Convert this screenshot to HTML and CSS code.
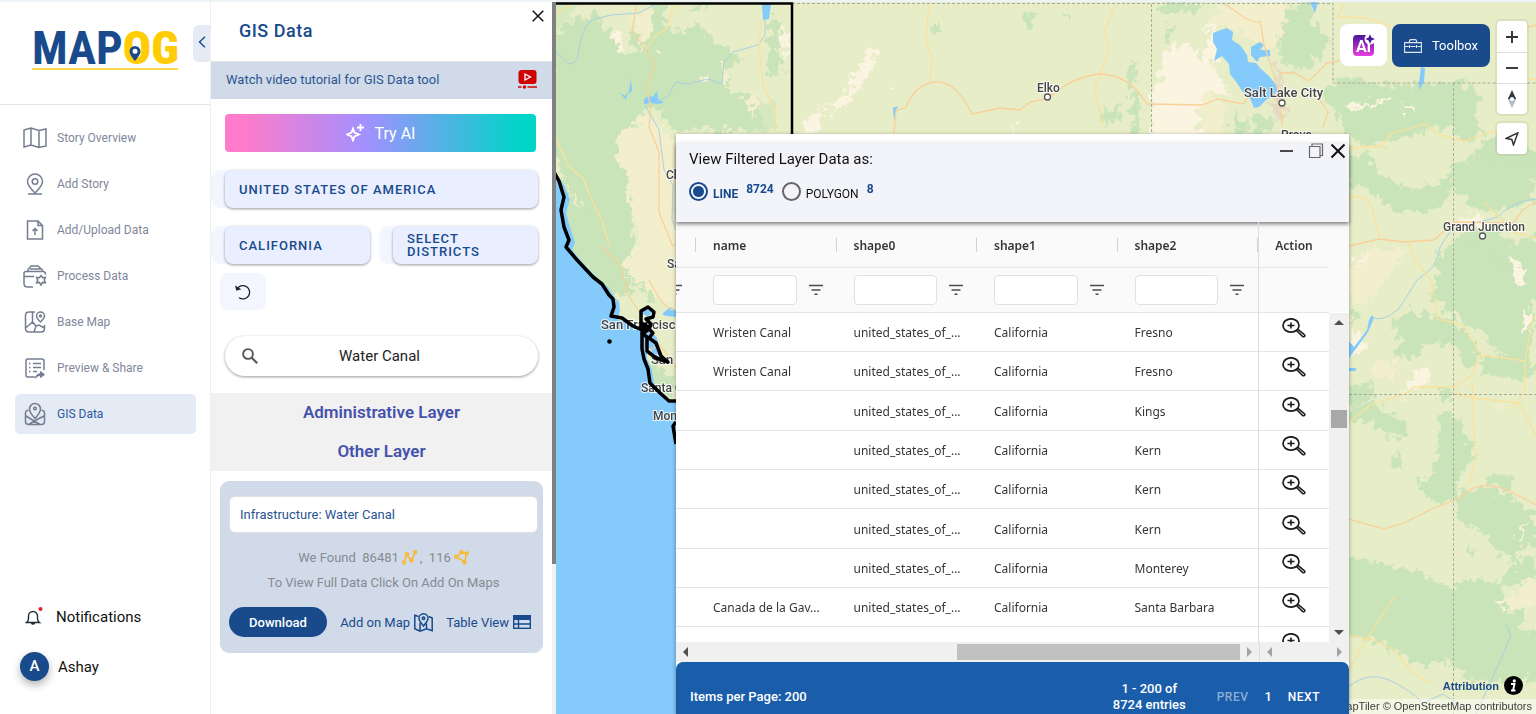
FILE: index.html
```html
<!DOCTYPE html>
<html lang="en">
<head>
  <meta charset="UTF-8" />
  <meta name="viewport" content="width=device-width, initial-scale=1.0"/>
  <title>MAPOG - GIS Data</title>
  <link rel="stylesheet" href="styles.css">
</head>
<body>

<!-- shared icons -->
<svg width="0" height="0" class="sprite" aria-hidden="true">
  <symbol id="filter" viewBox="0 0 14 12"><path d="M0 1.5h14M2.5 6h9M5.5 10.2h3" stroke="#4a4d50" stroke-width="1.6" fill="none"/></symbol>
  <symbol id="magnify" viewBox="0 0 24 20">
    <g fill="none" stroke="#1b1b1b">
      <ellipse cx="9" cy="7.5" rx="8" ry="6.7" stroke-width="1.7"/>
      <path d="M5.5 7.5h7M9 4.5v6" stroke-width="1.6"/>
      <path d="M14.2 12.2l6.3 6.2q1 .8 2 0 .9-1-.2-1.8l-6.6-5.4" stroke-width="1.5"/>
    </g>
  </symbol>
</svg>

<nav class="sidebar">
  <div class="brand">
    <div class="logo">
      <span class="logo-text">MAP<b>OG</b></span>
      <svg class="logo-pin" width="12" height="15" viewBox="0 0 12 15"><path fill="#184a8c" fill-rule="evenodd" d="M6 0a5.500 5.500 0 0 1 5.500 5.500C11.500 9 6 15 6 15S.5 9 .5 5.500A5.500 5.500 0 0 1 6 0zm0 2.800a2.500 2.500 0 1 0 0 5 2.500 2.500 0 0 0 0-5z"/></svg>
    </div>
    <button class="collapse" aria-label="Collapse menu">
      <svg width="8" height="12" viewBox="0 0 8 12"><path d="M7 .8 1.500 6 7 11.200" fill="none" stroke="#184a8c" stroke-width="1.400"/></svg>
    </button>
  </div>

  <ul class="menu">
    <li><a href="#">
      <svg viewBox="0 0 24 24"><path d="M1 4l7-2 8 2.500 7-1.500v17l-7 1.500L8 19l-7 2zM8 2v17M16 4.500v17"/></svg>
      Story Overview</a></li>
    <li><a href="#">
      <svg viewBox="0 0 24 24"><path d="M12 21C8 17 4.500 13.500 4.500 9.500a7.500 7.500 0 0 1 15 0C19.500 13.500 16 17 12 21zM5 22h14"/><circle cx="12" cy="9.500" r="2.800"/></svg>
      Add Story</a></li>
    <li><a href="#">
      <svg viewBox="0 0 24 24"><path d="M4.500 3h10.500l4.500 4.500V21h-15zM15 3v4.500h4.500M12 17v-6.500M9.500 13l2.500-2.500 2.500 2.500"/></svg>
      Add/Upload Data</a></li>
    <li><a href="#">
      <svg viewBox="0 0 24 24"><path d="M5 8V5.500L8 2h7l4.500 4V8M7 5h11M10 23H4.500Q1 23 1 19.500V9.500Q1 7.500 3 7.500h17q2.500 0 2.500 3M1 12.500h10"/><path d="M18 11.500l1.600 2.300 2.800-.3-1.200 2.600 1.200 2.600-2.800-.3L18 21l-1.600-2.600-2.800.3 1.200-2.600-1.200-2.600 2.800.3z"/></svg>
      Process Data</a></li>
    <li><a href="#">
      <svg viewBox="0 0 24 24"><path d="M12 2H6Q2.500 2 2.500 5.500v13Q2.500 22 6 22h12q3.500 0 3.500-3.500V15M9.500 2v10l-7 6M9.500 12l3.500 4-2 6M13 16l3-1 5.500 3"/><path d="M17.500 12C15 9.500 13.500 8 13.500 6a4 4 0 0 1 8 0c0 2-1.500 3.500-4 6z"/><circle cx="17.500" cy="6" r="1"/></svg>
      Base Map</a></li>
    <li><a href="#">
      <svg viewBox="0 0 24 24"><path d="M12 21H5q-2 0-2-2V5q0-2 2-2h14q2 0 2 2v9M10 7.500h8M10 11.500h8M10 15.500h4M6 7.500h1.500M6 11.500h1.500M6 15.500h1.500"/><path fill="#747d90" stroke-width="1" d="M12.500 22q.5-4 5-4.500V15.500l4 3-4 3v-2q-3-.3-5 2.500z"/></svg>
      Preview &amp; Share</a></li>
    <li><a href="#" class="active">
      <svg viewBox="0 0 24 24"><path d="M5.500 8.500L4 8.500Q2.500 9 2.500 11v8.500q0 3 3 3h13q3 0 3-3V11q0-2-1.500-2.500h-1.500M3 14l4 2.500 10 6M21 14l-6 3-9.500 5.500"/><path d="M12 16.500C9 13 6.500 10.500 6.500 7a5.500 5.500 0 0 1 11 0c0 3.500-2.500 6-5.500 9.500z"/><circle cx="12" cy="6.500" r="1.300"/></svg>
      GIS Data</a></li>
  </ul>

  <div class="user-menu">
    <a href="#" class="notifications">
      <svg width="18" height="20" viewBox="0 0 18 20"><path d="M1.500 15.500q2-1.500 2-4V9a4.500 4.500 0 0 1 9 0v2.500q0 2.500 2 4zM6.500 16a1.600 1.600 0 0 0 3 0" fill="none" stroke="#222c35" stroke-width="1.400"/><circle cx="15.500" cy="2" r="2" fill="#ec1c24"/></svg>
      Notifications
    </a>
    <a href="#" class="account"><span class="avatar">A</span>Ashay</a>
  </div>
</nav>

<section class="panel">
  <div class="panel-body">
    <header class="panel-header">
      <h1>GIS Data</h1>
      <button class="close" aria-label="Close panel">
        <svg width="12" height="12" viewBox="0 0 12 12"><path d="M.7.7l10.600 10.600M11.300.7L.7 11.300" stroke="#111" stroke-width="1.500"/></svg>
      </button>
    </header>
    <a href="#" class="tutorial">
      Watch video tutorial for GIS Data tool
      <svg width="19" height="19" viewBox="0 0 19 19"><rect x=".5" width="18" height="14" rx="3" fill="#cf0000"/><path d="M7 4l5.500 3L7 10z" fill="none" stroke="#fff" stroke-width="1.300"/><path d="M0 17h3.500M9.500 17H19" stroke="#cf0000" stroke-width="1.500"/><circle cx="6.500" cy="17" r="1.700" fill="#cf0000"/></svg>
    </a>

    <div class="picker">
      <button class="try-ai">
        <svg width="18" height="18" viewBox="0 0 18 18"><path d="M7 4.500l1.500 4 4.500 2-4.500 2L7 16.500l-1.500-4-4.500-2 4.500-2z" fill="none" stroke="#fff" stroke-width="1.800"/><path d="M14.500 0v7M11 3.500h7" stroke="#fff" stroke-width="1.800"/></svg>
        Try AI
      </button>
      <div class="region"><button>United States of America</button></div>
      <div class="region-row">
        <div class="region"><button>California</button></div>
        <div class="region"><button>Select Districts</button></div>
      </div>
      <button class="reset" aria-label="Reset">
        <svg width="16" height="16" viewBox="0 0 16 16"><path d="M1.800 5.500A6.700 6.700 0 1 1 4 13.700" fill="none" stroke="#222" stroke-width="1.300"/><path d="M0 1.500l1.300 5.200 5-1.400z" fill="#222"/></svg>
      </button>
      <label class="search">
        <svg width="16" height="16" viewBox="0 0 16 16"><circle cx="6" cy="6" r="4.900" fill="none" stroke="#555" stroke-width="1.900"/><path d="M9.500 9.500l5.700 5.700" stroke="#555" stroke-width="2.200"/></svg>
        <input type="text" value="Water Canal" aria-label="Search data">
      </label>
    </div>

    <div class="layer-groups">
      <h2>Administrative Layer</h2>
      <h2>Other Layer</h2>
    </div>

    <article class="result">
      <h3>Infrastructure: Water Canal</h3>
      <p>We Found&nbsp; 86481
        <svg width="15" height="15" viewBox="0 0 15 15"><g fill="none" stroke="#fbb829" stroke-width="1.500"><path d="M2.500 11.500l2-7 5 6 3.500-8"/><circle cx="2" cy="12.500" r="1.400"/><circle cx="5" cy="4" r="1.400"/><circle cx="9.500" cy="10.500" r="1.400"/><circle cx="13" cy="2" r="1.400"/></g></svg>,&nbsp; 116
        <svg width="15" height="15" viewBox="0 0 15 15"><g fill="none" stroke="#fbb829" stroke-width="1.500"><path d="M3 6.500l4-3.500 5 .500-1 8.500-7-4z"/><circle cx="2" cy="7" r="1.400"/><circle cx="7.500" cy="2" r="1.400"/><circle cx="12.800" cy="3.500" r="1.400"/><circle cx="10.500" cy="12.500" r="1.400"/></g></svg>
      </p>
      <p>To View Full Data Click On Add On Maps</p>
      <div class="actions">
        <button class="download">Download</button>
        <a href="#">Add on Map
          <svg width="19" height="19" viewBox="0 0 19 19"><g fill="none" stroke="#184a8c" stroke-width="1.500"><path d="M4.500 3.500L.8 2.300v13.500l5.200 2.400 6.500-2.400 5.700 2V5l-3.400-1.500M6 10v8M12.500 10.500v5"/><path d="M9.500 13C6.500 9.500 5 7.500 5 5.300a4.500 4.500 0 0 1 9 0c0 2.200-1.500 4.200-4.500 7.700z"/><circle cx="9.500" cy="5.300" r="1.200"/></g></svg>
        </a>
        <a href="#">Table View
          <svg width="18" height="14" viewBox="0 0 18 14"><rect x=".7" y=".7" width="16.600" height="12.600" fill="none" stroke="#184a8c" stroke-width="1.400"/><path fill="#184a8c" d="M0 0h18v5H0z"/><path d="M0 9h18M5.500 5v9" stroke="#184a8c" stroke-width="1.400"/></svg>
        </a>
      </div>
    </article>
  </div>
  <div class="panel-scroll"><div class="panel-thumb"></div></div>
</section>

<main class="map">
  <svg class="map-canvas" viewBox="556 2 980 712" preserveAspectRatio="xMinYMin slice">
    <defs>
      <filter id="rough" x="-5%" y="-5%" width="110%" height="110%">
        <feTurbulence type="fractalNoise" baseFrequency="0.13" numOctaves="4" seed="4"/>
        <feDisplacementMap in="SourceGraphic" scale="20" xChannelSelector="R" yChannelSelector="G"/>
      </filter>
    </defs>
    <rect x="540" width="1020" height="730" fill="#e7edc7"/>

    <!-- forests and dry land -->
    <g filter="url(#rough)">
      <g transform="translate(550) scale(.3333)">
        <path fill="#d6e8bd" d="M0 0h90l-40 60L0 110zM380 430l-20 60 20 60zM600 330l70-30 10 90-80 10z"/>
        <g fill="#c8e4b8">
          <path d="M0 120L60 60l70-20 50 60 30 60 40 0-10-60 20-30 40 20 50-15 40 20 60-20 50 60 40 15 40 35-30 15-20 70 90 30 30 90H370l-60-75-40 30-40 40-15 60 40 90 15 90-30 60 20 90 30 50 70 30-50 50-60-60-50-40-40-90-60-90-50-70-50-110z"/>
          <path d="M0 510l40 30 30 70 60 30 50 110 40 70 30 60-60 20-120-130-30-70z"/>
          <path d="M300 0h50l-10 90-35-10zM655 80l30-30 10 170-40 10zM1140 90l35-30-5 40zM1425 40h25v45h-25zM450 0l30 20-70 20zM270 1075l50 15 50 50 5 55-80-40zM340 800l-20 80 40 30z"/>
        </g>
        <path fill="#f3efcd" d="M215 390l85-45 45 55 35 30v500l-40-20-80-70-40-60 60-50-30-80-20-130-30-40zM250 60l50-40 10 80-30 45zM510 180l40 30-30 40zM590 300l30-20-10 70z"/>
        <path fill="#fbf4e0" d="M945 150l42 10-40 80-30 50-80 60 20-50 30-20 40-80 25-20zM825 320l-30 80h-35l10-50zM190 100l20-5 5 60-15-10zM320 145l15 5-8 12zM1020 260l14 4-8 18zM450 230l35-5-20 20zM1380 370l25-5-20 30zM690 70l15 10 15 100-20-20z"/>
      </g>
      <g transform="translate(1040) scale(.3333)">
        <g fill="#c8e4b8">
          <path d="M70 35l25 5-10 35zM370 75l30 5-15 55zM350 10h150l-30 30-110-5zM260 190l25-10 5 70-30 20zM275 270l25 10v120h-25zM180 340l60-30v50l-50 15zM575 340l50 20-10 45h-30zM640 340l60 10-10 45h-50zM750 20l60-10 10 60 50 60-70 80-70-20-20-60zM480 290l40 20-30 80z"/>
          <path d="M850 270l70-40 120 25 110-5 110-10 60 50-20 60 40 50-70 30-40-50-80 10-110 40-70 10-60-50z"/>
          <path d="M910 480l70-20 60 80 70 30 80-10 70-60 40-50 80-50 120 60v70l-60 20-70-10-60 60-70-30-60 70-120-10-60-50-80-30z"/>
          <path d="M1230 500l80-30 170 20v110l-110 40-80-20zM1250 700l110-30 60 60 80-30v200h-220z"/>
        </g>
        <path fill="#f3efcd" d="M540 10h200l-20 110-40 30-90-60-80-20zM480 260l80 60-10 90h-60z"/>
        <path fill="#fbf4e0" d="M500 70l60 30-40 100 60 100-80-30-30 90 20 50H335v-130l30-60 10-60 60-40 50 60 20-50zM910 310l60 5 70-25 10 10-60 20-60 15zM1080 310l50 15-25 10zM980 740l100 20-60 30zM1250 660l70-20 20 40-70 10z"/>
        <path fill="#e4d9c4" d="M695 180l15-5 15 80 15 70-25 45-20-60 15-60z"/>
      </g>
      <g transform="translate(1330 160) scale(.3333)">
        <g fill="#c8e4b8">
          <path d="M310 290l60-40 90 10 60 60 60 60 40 100-30 120-90-20-40-60-90-50-70-60 20-60zM180 490l60-40 120 30 60 40 30 60-30 50-50-70-80-20-40 60-50-10 10-60zM450 600l120-20 60 50-50 30-120-20zM60 680l60-10 10 50-70 20zM60 740l80-10 90 60-10 50-60-20-50-40-60 10zM330 690h40v30h-40zM330 760l60 10 45 120-50 60-20 80-60-10-50-60 50-10 20-80zM180 900l30-30 20 50-40 5zM470 940l80 10-10 40-60-20zM380 1000l90-20 90 40 60 60v70l-70 20 40 60-90-60-40-50-80-50zM410 1150l30 20-20 15zM520 1240l100-60v80l-100 20z"/>
          <path d="M0 1180l100 20 100 20 80 20 70 40 60-20 120 10-20 60 80 20-20 60 70 0v150H420l-70-60-80 20-70-40-60-40-80-10-60-50zM60 440l25 20-25 40z"/>
        </g>
        <path fill="#f3efcd" d="M60 310l60-50 100 10-30 60-60 80-70 20zM130 600l80 10-10 50-80-10zM530 1320l90-70v80l-80 30zM500 740l30 5-10 20z"/>
        <path fill="#fbf4e0" d="M60 510l20 10 40 30-60 50zM240 660l30-45 30 20-10 40-50 10-30 30zM60 310l70-40-40 45zM540 280l40 50 10 60-40-30zM590 450l20 20-10 50-30-5zM555 1140l40-55-15 50zM500 1330l30-10-10 25z"/>
      </g>
    </g>

    <!-- water -->
    <g fill="#84cafb">
      <path d="M540 170l16 4 8 11 6 14-4 14 4 14 5 16-3 7 11 13 16 17 9 7 7 11 4 4 1 8-2 10 9 2 10 6 9 4 1 18v9l5 11 2 14 10 10 8 8h12v400H540z"/>
      <path d="M762 4h9l-2 15-6 1zM620 93l5 3 4-4 2-13 1 12-5 4-1 5zM644 99l5-3 4 1 4-6 1 8 6 3-5 2-9-1-6 1zM893 108l5-2-2 4-2 11zM662 314l8-7 7 4v6l-11-1zM640 312q5-6 12 0l-4 5zM647 326l10 12 5 20-8-2-8-15z"/>
      <path d="M1213 33l5-2 9-3 6 4-1 8 8 5 7 10 1 7 8 1 5 6 8 7 9 11v4l-12 9-7 7-5 1-5-12-7-5-5-8-7-9-1-10-7-8-8 5 3-12-4-7zM1251 47l9-5 4 3-4 5 10 0v6l-10 1-3 5-6-7zM1310 2h8l-3 11zM1421 67l4 1-1 14-5 8 0-8zM1349 341l5 6 7-9 6-8 2-10 3-5 2 3-6 14-10 14-9 12zM1349 368h7v3h-7z"/>
    </g>

    <!-- rivers -->
    <g fill="none" stroke="#aacfe3" stroke-width="1">
      <path d="M556 52l13 12q9 1 10-15t12-29l20-5 28-2 15-8M765 20v15l-7 10-25 7-9 10-2 22-14-5-20 5-12-2-8 14-11 6M645 105l14 25 5 40 9 15-1 35 4 10"/>
      <path d="M1536 199q-26 3-38 18l-46 12-12 18q-2 21-22 32l-20 31q-18 13-25 7M1349 686q20-15 40-6t34 23l20-9 16 11M1506 625l5 10-10 24-25 55"/>
    </g>

    <!-- roads -->
    <g fill="none" stroke="#fbe19a" stroke-width="1.300">
      <path d="M556 14l14-9M674 4l-7 24-12 8-10 15M761 20l-2 25 4 40 12 25 0 22M929 4l-3 35 6 18-2 24M556 138l12 28 15 12 8 20 12 25 6 22M1115 4l-10 28 4 18-15 40 10 35M1344 4l-6 13 27 1 26 8M1536 80l-35-6M1349 148l33-2 9-12 17-5 17-5 15 11 25 6 25-9 35-8"/>
      <path d="M1349 197q22-3 24 15l7 26M1407 240l8 20 17 22 5 37 26 6 18 30 44 6 8-45M1536 238l-20-5-32-30M1349 422l20-16 35-12 10-7 40 0 18-12 8-20M1454 393l20 5 45 5 17 33M1472 380l3 80-5 23M1512 410l13-20v-30M1349 672l12-24 33-51M1349 635l25 5 20 10 20 24 15 8"/>
    </g>
    <g fill="none" stroke="#fad09a" stroke-width="1.300">
      <path d="M637 4l-5 26 14 20 9 15-9 22 5 20-2 20 10 25 0 60 14 35M600 245l20 20 8 30 15 22M649 280q15 30 25 30M650 350l10-5 16 22M894 133l2-22 10-4q10-24 30-25t36 32l28-6 20 2 10-8 19-4q20-20 50-24 30 0 48 30l55 1 16-6 25 5 8-10M1260 20l4 25 10 30 6 25 2 25M1225 4l20 14 14 5M1280 73l15 0 14 8 18-18 20-4M1320 100l8 12-5 15M1349 34l35-2M1510 32l26-7M1349 246l30-7 25 3 30-2 20-18 60 1q12-24 42-26"/>
      <path d="M1349 519l35 10 20-6 30-15 26-10q16-19 45-9l30 15 21 14"/>
    </g>

    <!-- borders -->
    <g fill="none" stroke="#a9aaa0" stroke-dasharray="3 2">
      <path d="M792 3.500h541v79.500h203M1151.500 4v140M1453.500 83v631M1349 394.500h187"/>
    </g>
    <path fill="none" stroke="#000" stroke-width="2.500" d="M556 3.500h236v140"/>

    <g class="labels">
      <text x="1037" y="92">Elko</text>
      <text class="city" x="1244" y="97">Salt Lake City</text>
      <text x="1281" y="139">Provo</text>
      <text x="1443" y="231">Grand Junction</text>
      <text x="666" y="179">Chico</text>
      <text x="667" y="268">Sacramento</text>
      <text class="city" x="601" y="329">San Francisco</text>
      <text class="city" x="651" y="364">San Jose</text>
      <text x="641" y="392">Santa Cruz</text>
      <text x="653" y="420">Monterey</text>
    </g>
    <g fill="#fff" stroke="#555" stroke-width="1.300">
      <circle cx="1047.500" cy="97" r="3"/><circle cx="1282" cy="103" r="3"/><circle cx="1482.500" cy="236" r="3"/>
    </g>

    <!-- selected state outline -->
    <g fill="none" stroke="#000" stroke-width="3.500" stroke-linejoin="round">
      <path d="M554 172l5 9 5 16-3 13 3 17 5 13-3 7 11 13 16 17 9 7 7 11 4 4 1 8-3 9 11 2 11 8 9 4v19l2 10 4 10 2 14 10 10 9 8h12"/>
      <path d="M641 328l0-17 7-4 6 5-1 5-7 2 5 5-2 5 4 4-4 5 7 5 5 13 7 6-12-4-9-7 0-14-4-3 6-5-4-5-2 7M640 321l9 10M642 331l9-6M676 422l-3 4 3 18"/>
    </g>
    <circle cx="609.500" cy="341.500" r="2.300"/>
  </svg>

  <div class="map-tools">
    <button class="ai-tool" aria-label="AI tools">
      <svg width="23" height="23" viewBox="0 0 23 23">
        <defs><linearGradient id="ai" x2="0" y2="1"><stop stop-color="#49179a"/><stop offset="1" stop-color="#e83fe0"/></linearGradient></defs>
        <path fill="url(#ai)" d="M4.500 1H14l2 5 6 3v9q0 4-4 4H5q-4 0-4-4V5q0-4 3.500-4z"/>
        <text x="4" y="18" fill="#fff" font-family="Roboto, sans-serif" font-weight="700" font-size="16">Ai</text>
        <circle cx="18" cy="5" r="5.500" fill="#fff"/>
        <path fill="#49179a" d="M18 .3l1.400 3.300L23 5l-3.600 1.400L18 10l-1.400-3.600L13.500 5l3.100-1.400z"/>
      </svg>
    </button>
    <button class="toolbox">
      <svg width="18" height="14" viewBox="0 0 18 14"><path d="M.6 3.600h16.800v9.800H.6zM5.500 3.500V2q0-1.400 1.400-1.400h4.200q1.400 0 1.400 1.400v1.500M.6 7.500h4M6.500 7.500h5M13.500 7.500h4M5.500 6v3M12.500 6v3" fill="none" stroke="#dfe7f3" stroke-width="1.100"/></svg>
      Toolbox
    </button>
    <div class="nav-controls">
      <div class="control-group">
        <button aria-label="Zoom in"><svg width="12" height="12" viewBox="0 0 12 12"><path d="M6 0v12M0 6h12" stroke="#333" stroke-width="1.900"/></svg></button>
        <button aria-label="Zoom out"><svg width="12" height="12" viewBox="0 0 12 12"><path d="M0 6h12" stroke="#333" stroke-width="1.900"/></svg></button>
        <button aria-label="Reset north"><svg width="10" height="18" viewBox="0 0 10 18"><path d="M.8 9L5 0l4.200 9H7a2 2 0 0 0-4 0z" fill="#333b42"/><path d="M.8 9L5 18l4.200-9H7a2 2 0 0 1-4 0z" fill="#b4b9cc"/></svg></button>
      </div>
      <div class="control-group">
        <button aria-label="Find my location"><svg width="14" height="14" viewBox="0 0 14 14"><path d="M1 6.500L12.800.9 8.500 13 6.800 7.500z" fill="none" stroke="#333" stroke-width="1.500"/></svg></button>
      </div>
    </div>
  </div>

  <div class="attribution">
    <a href="#" class="attribution-link">Attribution
      <svg width="19" height="19" viewBox="0 0 19 19"><circle cx="9.500" cy="9.500" r="9.500"/><circle cx="10.300" cy="4.900" r="1.600" fill="#fff"/><path d="M7 8h3.500l-1.500 6.500h2.500M7 14.500h2" fill="none" stroke="#fff" stroke-width="1.900"/></svg>
    </a>
    <p>© MapTiler © OpenStreetMap contributors</p>
  </div>

  <section class="data-window">
    <div class="window-bar"></div>
    <header class="window-header">
      <div>
        <h2>View Filtered Layer Data as:</h2>
        <div class="geometry">
          <input type="radio" name="geometry" id="line" checked>
          <label for="line">LINE</label><span class="count">8724</span>
          <input type="radio" name="geometry" id="polygon">
          <label for="polygon">POLYGON</label><span class="count">8</span>
        </div>
      </div>
      <div class="window-buttons">
        <button aria-label="Minimize"><svg width="14" height="16" viewBox="0 0 14 16"><path d="M0 8h13" stroke="#111" stroke-width="1.500"/></svg></button>
        <button aria-label="Maximize"><svg width="16" height="16" viewBox="0 0 16 16"><path d="M1.500 3.500h10.500v11H1.500zM4 3V1h10.500v11.500H12" fill="none" stroke="#666" stroke-width="1.200"/></svg></button>
        <button aria-label="Close"><svg width="16" height="16" viewBox="0 0 16 16"><path d="M1.500 1.500l13 13M14.500 1.500l-13 13" stroke="#111" stroke-width="2"/></svg></button>
      </div>
    </header>

    <div class="grid">
      <div class="grid-main">
        <table>
          <colgroup><col class="col-cut"><col><col><col><col><col class="col-action"></colgroup>
          <thead>
            <tr class="titles"><th></th><th>name</th><th>shape0</th><th>shape1</th><th>shape2</th><th class="action">Action</th></tr>
            <tr class="filters">
              <td><div class="filter-cut"><svg width="14" height="12"><use href="#filter"/></svg></div></td>
              <td><div><input type="text" aria-label="Filter name"><svg width="14" height="12"><use href="#filter"/></svg></div></td>
              <td><div><input type="text" aria-label="Filter shape0"><svg width="14" height="12"><use href="#filter"/></svg></div></td>
              <td><div><input type="text" aria-label="Filter shape1"><svg width="14" height="12"><use href="#filter"/></svg></div></td>
              <td><div><input type="text" aria-label="Filter shape2"><svg width="14" height="12"><use href="#filter"/></svg></div></td>
              <td class="action"></td>
            </tr>
          </thead>
          <tbody>
            <tr><td></td><td>Wristen Canal</td><td>united_states_of_...</td><td>California</td><td>Fresno</td><td class="action"><button aria-label="Zoom to"><svg width="24" height="20"><use href="#magnify"/></svg></button></td></tr>
            <tr><td></td><td>Wristen Canal</td><td>united_states_of_...</td><td>California</td><td>Fresno</td><td class="action"><button aria-label="Zoom to"><svg width="24" height="20"><use href="#magnify"/></svg></button></td></tr>
            <tr><td></td><td></td><td>united_states_of_...</td><td>California</td><td>Kings</td><td class="action"><button aria-label="Zoom to"><svg width="24" height="20"><use href="#magnify"/></svg></button></td></tr>
            <tr><td></td><td></td><td>united_states_of_...</td><td>California</td><td>Kern</td><td class="action"><button aria-label="Zoom to"><svg width="24" height="20"><use href="#magnify"/></svg></button></td></tr>
            <tr><td></td><td></td><td>united_states_of_...</td><td>California</td><td>Kern</td><td class="action"><button aria-label="Zoom to"><svg width="24" height="20"><use href="#magnify"/></svg></button></td></tr>
            <tr><td></td><td></td><td>united_states_of_...</td><td>California</td><td>Kern</td><td class="action"><button aria-label="Zoom to"><svg width="24" height="20"><use href="#magnify"/></svg></button></td></tr>
            <tr><td></td><td></td><td>united_states_of_...</td><td>California</td><td>Monterey</td><td class="action"><button aria-label="Zoom to"><svg width="24" height="20"><use href="#magnify"/></svg></button></td></tr>
            <tr><td></td><td>Canada de la Gav...</td><td>united_states_of_...</td><td>California</td><td>Santa Barbara</td><td class="action"><button aria-label="Zoom to"><svg width="24" height="20"><use href="#magnify"/></svg></button></td></tr>
            <tr><td></td><td></td><td></td><td></td><td></td><td class="action"><button aria-label="Zoom to"><svg width="24" height="20"><use href="#magnify"/></svg></button></td></tr>
          </tbody>
        </table>
      </div>
      <div class="v-scroll">
        <div class="track">
          <span class="arrow up"></span>
          <span class="thumb"></span>
          <span class="arrow down"></span>
        </div>
      </div>
    </div>

    <div class="h-scroll">
      <div class="track-main"><span class="arrow left dark"></span><span class="thumb"></span><span class="arrow right"></span></div>
      <div class="track-action"><span class="arrow left"></span><span class="arrow right"></span></div>
    </div>

    <footer class="pager">
      <span class="per-page">Items per Page: 200</span>
      <span class="range">1 - 200 of<br>8724 entries</span>
      <button disabled>PREV</button>
      <span class="page">1</span>
      <button>NEXT</button>
    </footer>
  </section>
</main>

</body>
</html>
```
FILE: styles.css
```css
* {
  box-sizing: border-box;
}
body {
  margin: 0;
  height: 100vh;
  display: flex;
  overflow: hidden;
  border-top: 2px solid #eef3f8;
  font-family: Roboto, sans-serif;
  font-size: 13px;
  color: #111;
  background: #fff;
}
button {
  font: inherit;
  border: 0;
  padding: 0;
  background: none;
  cursor: pointer;
}
a {
  color: inherit;
  text-decoration: none;
}
svg {
  flex: none;
}
h1, h2, h3, p, ul {
  margin: 0;
  padding: 0;
}
.sprite {
  position: absolute;
}

/* sidebar */
.sidebar {
  width: 211px;
  flex: none;
  display: flex;
  flex-direction: column;
  border-right: 1px solid #eceef0;
}
.brand {
  position: relative;
  height: 103px;
  padding: 18px 32px 0;
  border-bottom: 1px solid #e2e4e6;
}
.logo {
  position: relative;
  width: 146px;
  height: 50px;
  border-bottom: 2px solid #ffd84a;
  text-align: center;
}
.logo-text {
  font-family: "Liberation Sans Narrow", "Roboto Condensed", Roboto, sans-serif;
  font-size: 47px;
  font-weight: 700;
  line-height: 55px;
  color: #184a8c;
}
.logo-text b {
  color: #ffcc05;
}
.logo-pin {
  position: absolute;
  left: 97px;
  top: 26px;
}
.collapse {
  position: absolute;
  right: 0;
  top: 23px;
  width: 17px;
  height: 37px;
  border-radius: 6px 0 0 6px;
  background: #e5ebf4;
}
.menu {
  list-style: none;
  padding: 13px 14px 0 15px;
  display: flex;
  flex-direction: column;
  gap: 6px;
  font-size: 12px;
}
.menu a {
  display: flex;
  align-items: center;
  gap: 10px;
  height: 40px;
  padding-left: 8px;
  border-radius: 5px;
  color: #7f879a;
}
.menu svg {
  width: 24px;
  height: 24px;
  fill: none;
  stroke: #747d90;
  stroke-width: 1.5;
}
.menu .active {
  background: #e5ebf4;
  color: #2a5a9c;
}
.user-menu {
  margin-top: auto;
  padding: 0 20px 33px;
  display: flex;
  flex-direction: column;
  gap: 25px;
  font-size: 15px;
}
.user-menu a {
  display: flex;
  align-items: center;
}
.notifications {
  gap: 13px;
  padding-left: 5px;
}
.account {
  gap: 9px;
}
.avatar {
  width: 29px;
  height: 29px;
  border-radius: 50%;
  background: #184a8c;
  color: #fff;
  font-weight: 500;
  line-height: 28px;
  text-align: center;
  box-shadow: 0 4px 9px rgba(0,0,0,0.3);
}

/* GIS data panel */
.panel {
  width: 345px;
  flex: none;
  display: flex;
}
.panel-body {
  flex: 1;
}
.panel-scroll {
  width: 4px;
  background: #f1f1f1;
}
.panel-thumb {
  height: 79%;
  background: #808080;
}
.panel-header {
  display: flex;
  justify-content: space-between;
  align-items: flex-start;
  height: 60px;
  padding: 8px 8px 0 28px;
  border-bottom: 1px solid #e4e8e6;
}
.panel-header h1 {
  margin-top: 8px;
  font-size: 18px;
  font-weight: 500;
  line-height: 26px;
  color: #184a8c;
  letter-spacing: 0.5px;
}
.close {
  line-height: 0;
}
.tutorial {
  display: flex;
  justify-content: space-between;
  align-items: center;
  height: 37px;
  padding: 0 15px 3px;
  background: #d1dae8;
  color: #2a5592;
}
.picker {
  padding: 15px 14px 17px;
}
.try-ai {
  display: flex;
  align-items: center;
  justify-content: center;
  gap: 11px;
  width: 311px;
  max-width: 100%;
  height: 38px;
  border-radius: 4px;
  background: linear-gradient(90deg, #ff7bcb 6%, #a390ff 45%, #00d5c8 95%);
  color: #fff;
  font-size: 16px;
}
.region {
  flex: 1;
  margin: 18px 0 0 -14px;
  padding-left: 14px;
  border-radius: 9px;
  background: #f4f6ff;
}
.region button {
  display: block;
  width: 100%;
  height: 38px;
  padding: 0 14px;
  border-radius: 8px;
  background: #eaefff;
  box-shadow: 0 1px 3px rgba(0,0,0,0.4);
  color: #184a8c;
  font-weight: 500;
  line-height: 13px;
  letter-spacing: 1px;
  text-align: left;
  text-transform: uppercase;
}
.region-row {
  display: flex;
  gap: 23px;
}
.reset {
  display: block;
  width: 46px;
  height: 37px;
  margin: 9px 0 0 -5px;
  border-radius: 8px;
  background: #f4f6ff;
  line-height: 0;
}
.search {
  display: flex;
  align-items: center;
  height: 40px;
  margin-top: 26px;
  padding: 0 37px 0 17px;
  border-radius: 20px;
  box-shadow: 0 1px 3px rgba(0,0,0,0.4);
}
.search input {
  flex: 1;
  min-width: 0;
  border: 0;
  outline: 0;
  background: none;
  font: 15px Roboto, sans-serif;
  color: #222;
  text-align: center;
}
.layer-groups {
  height: 78px;
  background: #f1f1f1;
  text-align: center;
}
.layer-groups h2 {
  font-size: 17px;
  font-weight: 600;
  line-height: 39px;
  color: #4552ab;
}
.result {
  margin: 10px 9px 0;
  padding: 15px 5px 16px 9px;
  border-radius: 9px;
  background: #d1dae8;
}
.result h3 {
  margin-bottom: 12px;
  padding-left: 10px;
  border: 1px solid #dedfe4;
  border-radius: 6px;
  background: #fff;
  font-size: 13px;
  font-weight: 400;
  line-height: 35px;
  color: #2a5592;
}
.result p {
  display: flex;
  align-items: center;
  justify-content: center;
  height: 25px;
  gap: 3px;
  color: #868b92;
}
.actions {
  display: flex;
  align-items: center;
  justify-content: space-between;
  margin-top: 12px;
  padding-right: 7px;
  color: #184a8c;
}
.actions a {
  display: flex;
  align-items: center;
  gap: 4px;
}
.download {
  width: 98px;
  height: 30px;
  border-radius: 15px;
  background: #184a8c;
  color: #fff;
  font-weight: 500;
}

/* map */
.map {
  position: relative;
  flex: 1;
  min-width: 0;
  overflow: hidden;
}
.map-canvas {
  position: absolute;
  width: 100%;
  height: 100%;
}
.labels text {
  font-size: 12px;
  font-weight: 500;
  fill: #444;
  stroke: rgba(255,255,255,0.8);
  stroke-width: 2px;
  paint-order: stroke;
}
.labels .city {
  font-size: 13px;
}
.map-tools {
  position: absolute;
  top: 19px;
  right: 9px;
  display: flex;
  align-items: flex-start;
}
.ai-tool {
  width: 47px;
  height: 42px;
  margin: 3px 5px 0 0;
  border-radius: 8px;
  background: #fff;
  line-height: 0;
}
.toolbox {
  display: flex;
  align-items: center;
  justify-content: center;
  gap: 10px;
  width: 98px;
  height: 43px;
  margin: 3px 7px 0 0;
  border-radius: 8px;
  background: #184a8c;
  color: #fff;
}
.control-group {
  width: 30px;
  margin-bottom: 9px;
  border-radius: 4px;
  background: #fff;
  box-shadow: 0 0 0 2px rgba(0,0,0,0.05);
}
.control-group button {
  display: flex;
  align-items: center;
  justify-content: center;
  width: 30px;
  height: 31px;
}
.control-group button + button {
  border-top: 1px solid #ddd;
}
.attribution {
  position: absolute;
  right: 0;
  bottom: 0;
  width: 187px;
  text-align: right;
  font-family: "Liberation Sans", sans-serif;
  font-size: 11px;
}
.attribution-link {
  display: inline-flex;
  align-items: center;
  gap: 5px;
  margin: 0 13px 4px 0;
  font-weight: 700;
  color: #184a8c;
}
.attribution p {
  display: flex;
  justify-content: flex-end;
  overflow: hidden;
  padding: 0 4px;
  background: rgba(255,255,255,0.5);
  line-height: 15px;
  white-space: nowrap;
  color: #404040;
}

/* floating attribute table */
.data-window {
  position: absolute;
  left: 120px;
  right: 187px;
  top: 132px;
  bottom: 0;
  display: flex;
  flex-direction: column;
  background: #fff;
  box-shadow: 0 1px 4px rgba(0,0,0,0.4);
}
.window-bar {
  height: 9px;
}
.window-header {
  position: relative;
  display: flex;
  justify-content: space-between;
  height: 79px;
  padding: 0 3px 0 13px;
  background: #f3f4f9;
  box-shadow: 0 2px 4px rgba(0,0,0,0.5);
}
.window-header h2 {
  margin-top: 6px;
  font-size: 15px;
  font-weight: 400;
  line-height: 20px;
}
.geometry {
  display: flex;
  align-items: center;
  height: 24px;
  margin-top: 10px;
  font-size: 12px;
}
.geometry input {
  appearance: none;
  width: 19px;
  height: 19px;
  margin: 0;
  border: 2px solid #666;
  border-radius: 50%;
}
.geometry input:checked {
  border-color: #184a8c;
  background: radial-gradient(#184a8c 5px, transparent 6px);
}
.geometry label {
  margin: 6px 8px 0 5px;
}
.geometry input:checked + label {
  color: #184a8c;
  font-weight: 700;
}
.count {
  align-self: flex-start;
  margin-right: 8px;
  font-weight: 700;
  line-height: 20px;
  color: #184a8c;
}
.window-buttons {
  display: flex;
  align-items: flex-start;
}
.window-buttons button {
  line-height: 0;
  margin-left: 6px;
}
.window-buttons button:nth-child(2) {
  margin-left: 14px;
}
.grid {
  flex: 1;
  min-height: 0;
  display: flex;
  overflow: hidden;
  background: linear-gradient(#fafafa 90px, #fff 90px);
}
.grid-main {
  flex: 1;
  min-width: 0;
}
.grid table {
  width: 100%;
  table-layout: fixed;
  border-spacing: 0;
  font-family: "Noto Sans", sans-serif;
  font-size: 12px;
  color: #33373a;
}
.col-cut {
  width: 20px;
}
.col-action {
  width: 71px;
}
.grid th,
.grid td {
  padding: 0 0 0 17px;
  border-bottom: 1px solid #e4e5e6;
  text-align: left;
  white-space: nowrap;
}
.titles th {
  position: relative;
  height: 46px;
  padding-top: 2px;
  font-weight: 600;
}
.titles th:not(.action)::after {
  content: "";
  position: absolute;
  right: 0;
  top: 16px;
  width: 1px;
  height: 14px;
  background: #d0d2d4;
}
.filters td {
  height: 45px;
}
.filters div {
  display: flex;
  align-items: center;
  gap: 12px;
  padding-right: 14px;
}
.filters input {
  flex: 1;
  min-width: 0;
  height: 30px;
  border: 1px solid #dfe1e3;
  border-radius: 4px;
  background: #fff;
}
.grid td:first-child {
  padding-left: 0;
}
.filters .filter-cut {
  justify-content: flex-end;
  overflow: hidden;
}
.grid .action {
  padding-left: 0;
  border-left: 1px solid #dcdddf;
  text-align: center;
}
.grid tbody td {
  height: 39px;
  padding-top: 1px;
  overflow: hidden;
}
.grid tbody tr:nth-child(3n) td {
  height: 40px;
}
.grid tbody button {
  display: block;
  margin: 0 auto 9px;
  line-height: 0;
}
.v-scroll {
  width: 20px;
  padding-top: 91px;
}
.v-scroll .track {
  display: flex;
  flex-direction: column;
  align-items: center;
  height: 100%;
  padding: 7px 0;
  background: #f0f0f0;
}
.v-scroll .thumb {
  width: 16px;
  height: 18px;
  margin: 85px 0 auto;
  background: #a8a8a8;
}
.arrow {
  border: 5px solid transparent;
}
.arrow.up {
  border-top: 0;
  border-bottom-color: #505050;
}
.arrow.down {
  border-bottom: 0;
  border-top-color: #505050;
}
.arrow.left {
  border-left: 0;
  border-right-color: #a3a3a3;
}
.arrow.right {
  border-right: 0;
  border-left-color: #a3a3a3;
}
.arrow.dark {
  border-right-color: #505050;
}
.h-scroll {
  display: flex;
  height: 20px;
  background: #f0f0f0;
}
.h-scroll > div {
  display: flex;
  align-items: center;
  justify-content: space-between;
  padding: 0 7px;
}
.track-main {
  flex: 1;
}
.track-main .thumb {
  width: 283px;
  height: 16px;
  margin: 0 7px 0 auto;
  background: #c1c1c1;
}
.track-action {
  width: 90px;
  border-left: 1px solid #dcdddf;
}
.pager {
  display: flex;
  align-items: center;
  height: 52px;
  padding: 17px 29px 0 14px;
  border-radius: 7px 7px 0 0;
  background: #1a5dab;
  color: #fff;
  font-weight: 500;
}
.per-page {
  margin-right: auto;
}
.range {
  margin-right: 31px;
  line-height: 16px;
  text-align: center;
}
.page {
  margin: 0 16px;
}
.pager button {
  color: #fff;
  font-size: 12px;
  letter-spacing: 0.5px;
}
.pager button:disabled {
  color: #8caed5;
}
```
